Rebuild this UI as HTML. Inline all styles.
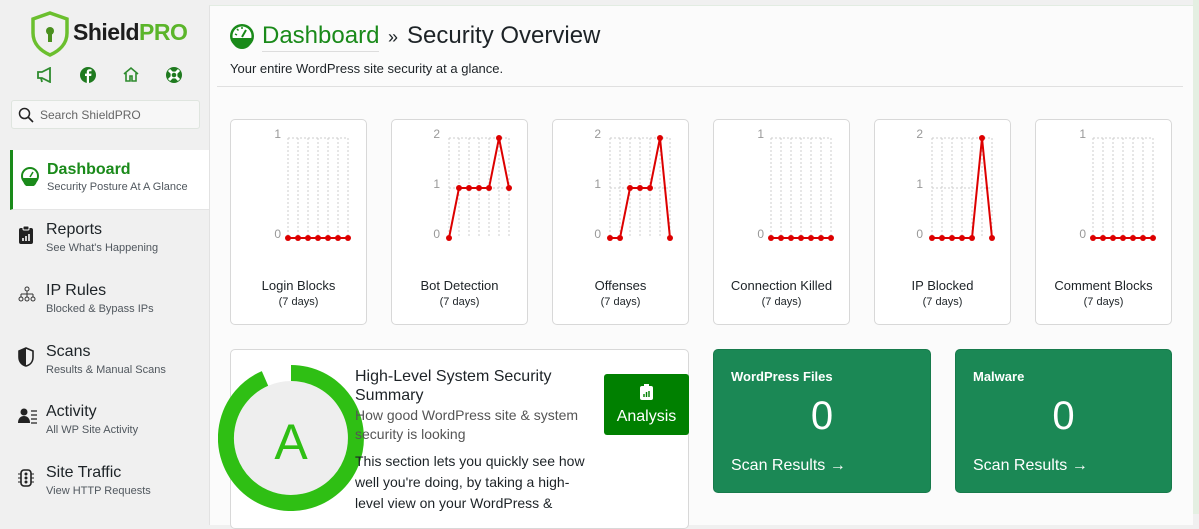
<!DOCTYPE html>
<html><head><meta charset="utf-8"><style>
*{box-sizing:border-box;margin:0;padding:0}
body{width:1199px;height:514px;overflow:hidden;background:#f0f0f0;font-family:"Liberation Sans",sans-serif;color:#1d2327;position:relative}
.side{position:absolute;left:0;top:0;width:209px;height:514px;background:#f0f0f0}
.main{position:absolute;left:209px;top:5px;width:984px;height:520px;background:#fbfbfb;border-left:1px solid #e2e2e2;border-top:1px solid #e2ece2}
.strip{position:absolute;left:1193px;top:0;width:6px;height:514px;background:#e4efe2}
.item{position:absolute;left:10px;width:199px;height:60px}
.item .t{position:absolute;left:36px;top:10px;font-size:16px;color:#1d2327}
.item .s{position:absolute;left:36px;top:31px;font-size:11px;color:#50575e}
.item svg{position:absolute;left:8px;top:14px}
.card{position:absolute;top:119px;width:137px;height:206px;background:#fff;border:1px solid #d8d8d8;border-radius:5px}
.card svg{position:absolute;left:0;top:0}
.card .n{position:absolute;top:158px;width:100%;text-align:center;font-size:13px}
.card .d{position:absolute;top:176px;width:100%;text-align:center;font-size:11px}
.g{position:absolute;top:349px;height:144px;background:#1b8855;border-radius:5px;color:#fff;border:1px solid #177a4b}
.g .h{position:absolute;left:17px;top:19px;font-size:13px;font-weight:bold}
.g .z{position:absolute;left:0;width:100%;text-align:center;top:44px;font-size:40px}
.g .l{position:absolute;left:17px;top:107px;font-size:16px}
</style></head><body>
<div class="side">
 <svg style="position:absolute;left:30px;top:11px" width="40" height="46" viewBox="0 0 40 46"><path d="M20 2 L37 8 V22 C37 33 29 40 20 44 C11 40 3 33 3 22 V8 Z" fill="none" stroke="#6bbf2e" stroke-width="3.5"/><circle cx="20" cy="20" r="4" fill="#4a8f1f"/><rect x="18" y="22" width="4" height="9" fill="#4a8f1f"/></svg>
 <div style="position:absolute;left:73px;top:19px;font-size:23px;font-weight:bold;letter-spacing:-0.5px"><span style="color:#1d1d1d">Shield</span><span style="color:#5bb52a">PRO</span></div>
 <svg style="position:absolute;left:36px;top:67px" width="18" height="16" viewBox="0 0 18 16"><path d="M2 5h4l8-4v14l-8-4H2z M5 11l1 4" fill="none" stroke="#2e8b2e" stroke-width="1.8"/></svg>
 <svg style="position:absolute;left:79px;top:66px" width="18" height="18"><circle cx="9" cy="9" r="8" fill="#1f7a1f"/><path d="M10 17V10h2.2l.3-2.4H10V6.3c0-.7.3-1 1-1h1.5V3.2H10.6C8.6 3.2 7.8 4.4 7.8 6v1.6H6V10h1.8v7z" fill="#fff"/></svg>
 <svg style="position:absolute;left:122px;top:66px" width="18" height="17" viewBox="0 0 18 17"><path d="M2 8L9 2l7 6 M4 7v8h4v-5h2v5h4V7" fill="none" stroke="#2e8b2e" stroke-width="1.6"/></svg>
 <svg style="position:absolute;left:165px;top:66px" width="18" height="18"><circle cx="9" cy="9" r="8" fill="#1f7a1f"/><circle cx="9" cy="9" r="3.5" fill="#fff"/><circle cx="9" cy="9" r="2.3" fill="#1f7a1f"/><path d="M4 4l3 3M14 4l-3 3M4 14l3-3M14 14l-3-3" stroke="#fff" stroke-width="3"/></svg>
 <div style="position:absolute;left:11px;top:100px;width:189px;height:29px;border:1px solid #dfe5df;background:#f7f7f7;border-radius:3px">
  <svg style="position:absolute;left:6px;top:6px" width="16" height="16"><circle cx="6.5" cy="6.5" r="5" fill="none" stroke="#222" stroke-width="1.5"/><path d="M10 10l5 5" stroke="#222" stroke-width="1.6"/></svg>
  <span style="position:absolute;left:28px;top:7px;font-size:12px;color:#666">Search ShieldPRO</span></div>
 <div class="item" style="top:150px;height:60px;background:#fff;border-left:3px solid #1a8a1a;border-bottom:1px solid #e5e5e5">
  <svg width="20" height="20" style="left:7px;top:16px"><circle cx="10" cy="10" r="9" fill="#1a8a1a"/><circle cx="10" cy="10" r="7" fill="#fff"/><path d="M3 12h14v2a7 7 0 0 1-14 0z" fill="#1a8a1a"/><path d="M10 11l3-5" stroke="#1a8a1a" stroke-width="1.5"/></svg>
  <div class="t" style="left:34px;top:11px;font-weight:bold;color:#1a8a1a">Dashboard</div><div class="s" style="left:34px;top:31px">Security Posture At A Glance</div></div>
 <div class="item" style="top:211px"><svg width="16" height="20"><rect x="1" y="3" width="14" height="16" rx="2" fill="#222"/><rect x="5" y="1" width="6" height="4" rx="1" fill="#222" stroke="#fff"/><path d="M5 16v-3M8 16v-5M11 16v-7" stroke="#fff" stroke-width="1.6"/></svg><div class="t">Reports</div><div class="s">See What's Happening</div></div>
 <div class="item" style="top:272px"><svg width="18" height="16"><circle cx="9" cy="3" r="2" fill="none" stroke="#333"/><path d="M9 5v3M3 8h12M3 8v3M9 8v3M15 8v3" stroke="#333"/><circle cx="3" cy="13" r="2" fill="none" stroke="#333"/><circle cx="9" cy="13" r="2" fill="none" stroke="#333"/><circle cx="15" cy="13" r="2" fill="none" stroke="#333"/></svg><div class="t">IP Rules</div><div class="s">Blocked &amp; Bypass IPs</div></div>
 <div class="item" style="top:333px"><svg width="16" height="20"><path d="M8 1l7 3v6c0 5-3 8-7 9-4-1-7-4-7-9V4z" fill="none" stroke="#222" stroke-width="1.6"/><path d="M8 1l-7 3v6c0 5 3 8 7 9z" fill="#222"/></svg><div class="t">Scans</div><div class="s">Results &amp; Manual Scans</div></div>
 <div class="item" style="top:393px"><svg width="20" height="18"><circle cx="6" cy="5" r="3.5" fill="#222"/><path d="M0 16c0-5 3-7 6-7s6 2 6 7z" fill="#222"/><path d="M13 4h6M13 8h6M13 12h6M13 16h6" stroke="#222" stroke-width="1.3"/></svg><div class="t">Activity</div><div class="s">All WP Site Activity</div></div>
 <div class="item" style="top:454px"><svg width="16" height="20"><rect x="3" y="2" width="10" height="16" rx="3" fill="none" stroke="#222" stroke-width="1.6"/><circle cx="8" cy="6" r="1.5" fill="#222"/><circle cx="8" cy="10" r="1.5" fill="#222"/><circle cx="8" cy="14" r="1.5" fill="#222"/><path d="M0 6h3M0 10h3M0 14h3M13 6h3M13 10h3M13 14h3" stroke="#222"/></svg><div class="t">Site Traffic</div><div class="s">View HTTP Requests</div></div>
</div>
<div class="main"></div>
<div class="strip"></div>
<svg style="position:absolute;left:229px;top:23px" width="26" height="26"><circle cx="13" cy="13" r="12" fill="#1a8a1a"/><circle cx="13" cy="13" r="9.5" fill="#fff"/><path d="M3 15h20v1a10 10 0 0 1-20 0z" fill="#1a8a1a"/><path d="M13 14l4-7" stroke="#1a8a1a" stroke-width="2"/><path d="M6 11l2 1M8 6l1.5 1.5M13 4v2" stroke="#1a8a1a" stroke-width="1.5"/></svg>
<div style="position:absolute;left:262px;top:22px;font-size:24px;color:#1a8a1a;border-bottom:1px solid #ddd;padding-bottom:1px">Dashboard</div>
<div style="position:absolute;left:388px;top:27px;font-size:18px">»</div>
<div style="position:absolute;left:407px;top:22px;font-size:24px;color:#1d2327">Security Overview</div>
<div style="position:absolute;left:230px;top:61px;font-size:13px">Your entire WordPress site security at a glance.</div>
<div style="position:absolute;left:217px;top:86px;width:966px;height:1px;background:#e0e0e0"></div>

<div class="card" style="left:230px"><svg width="137" height="150"><g stroke="#ccc" stroke-dasharray="2,2"><path d="M57 18V118M67 18V118M77 18V118M87 18V118M97 18V118M107 18V118M117 18V118M57 18H117"/></g><g fill="#999" font-size="12" text-anchor="end"><text x="50" y="18">1</text><text x="50" y="118">0</text></g><polyline points="57,118 67,118 77,118 87,118 97,118 107,118 117,118" fill="none" stroke="#d00" stroke-width="2"/><g fill="#d00"><circle cx="57" cy="118" r="3"/><circle cx="67" cy="118" r="3"/><circle cx="77" cy="118" r="3"/><circle cx="87" cy="118" r="3"/><circle cx="97" cy="118" r="3"/><circle cx="107" cy="118" r="3"/><circle cx="117" cy="118" r="3"/></g></svg><div class="n">Login Blocks</div><div class="d">(7 days)</div></div>

<div class="card" style="left:391px"><svg width="137" height="150"><g stroke="#ccc" stroke-dasharray="2,2"><path d="M57 18V118M67 18V118M77 18V118M87 18V118M97 18V118M107 18V118M117 18V118M57 18H117M57 68H117"/></g><g fill="#999" font-size="12" text-anchor="end"><text x="48" y="18">2</text><text x="48" y="68">1</text><text x="48" y="118">0</text></g><polyline points="57,118 67,68 77,68 87,68 97,68 107,18 117,68" fill="none" stroke="#d00" stroke-width="2"/><g fill="#d00"><circle cx="57" cy="118" r="3"/><circle cx="67" cy="68" r="3"/><circle cx="77" cy="68" r="3"/><circle cx="87" cy="68" r="3"/><circle cx="97" cy="68" r="3"/><circle cx="107" cy="18" r="3"/><circle cx="117" cy="68" r="3"/></g></svg><div class="n">Bot Detection</div><div class="d">(7 days)</div></div>

<div class="card" style="left:552px"><svg width="137" height="150"><g stroke="#ccc" stroke-dasharray="2,2"><path d="M57 18V118M67 18V118M77 18V118M87 18V118M97 18V118M107 18V118M117 18V118M57 18H117M57 68H117"/></g><g fill="#999" font-size="12" text-anchor="end"><text x="48" y="18">2</text><text x="48" y="68">1</text><text x="48" y="118">0</text></g><polyline points="57,118 67,118 77,68 87,68 97,68 107,18 117,118" fill="none" stroke="#d00" stroke-width="2"/><g fill="#d00"><circle cx="57" cy="118" r="3"/><circle cx="67" cy="118" r="3"/><circle cx="77" cy="68" r="3"/><circle cx="87" cy="68" r="3"/><circle cx="97" cy="68" r="3"/><circle cx="107" cy="18" r="3"/><circle cx="117" cy="118" r="3"/></g></svg><div class="n">Offenses</div><div class="d">(7 days)</div></div>

<div class="card" style="left:713px"><svg width="137" height="150"><g stroke="#ccc" stroke-dasharray="2,2"><path d="M57 18V118M67 18V118M77 18V118M87 18V118M97 18V118M107 18V118M117 18V118M57 18H117"/></g><g fill="#999" font-size="12" text-anchor="end"><text x="50" y="18">1</text><text x="50" y="118">0</text></g><polyline points="57,118 117,118" fill="none" stroke="#d00" stroke-width="2"/><g fill="#d00"><circle cx="57" cy="118" r="3"/><circle cx="67" cy="118" r="3"/><circle cx="77" cy="118" r="3"/><circle cx="87" cy="118" r="3"/><circle cx="97" cy="118" r="3"/><circle cx="107" cy="118" r="3"/><circle cx="117" cy="118" r="3"/></g></svg><div class="n">Connection Killed</div><div class="d">(7 days)</div></div>

<div class="card" style="left:874px"><svg width="137" height="150"><g stroke="#ccc" stroke-dasharray="2,2"><path d="M57 18V118M67 18V118M77 18V118M87 18V118M97 18V118M107 18V118M117 18V118M57 18H117M57 68H117"/></g><g fill="#999" font-size="12" text-anchor="end"><text x="48" y="18">2</text><text x="48" y="68">1</text><text x="48" y="118">0</text></g><polyline points="57,118 67,118 77,118 87,118 97,118 107,18 117,118" fill="none" stroke="#d00" stroke-width="2"/><g fill="#d00"><circle cx="57" cy="118" r="3"/><circle cx="67" cy="118" r="3"/><circle cx="77" cy="118" r="3"/><circle cx="87" cy="118" r="3"/><circle cx="97" cy="118" r="3"/><circle cx="107" cy="18" r="3"/><circle cx="117" cy="118" r="3"/></g></svg><div class="n">IP Blocked</div><div class="d">(7 days)</div></div>

<div class="card" style="left:1035px"><svg width="137" height="150"><g stroke="#ccc" stroke-dasharray="2,2"><path d="M57 18V118M67 18V118M77 18V118M87 18V118M97 18V118M107 18V118M117 18V118M57 18H117"/></g><g fill="#999" font-size="12" text-anchor="end"><text x="50" y="18">1</text><text x="50" y="118">0</text></g><polyline points="57,118 117,118" fill="none" stroke="#d00" stroke-width="2"/><g fill="#d00"><circle cx="57" cy="118" r="3"/><circle cx="67" cy="118" r="3"/><circle cx="77" cy="118" r="3"/><circle cx="87" cy="118" r="3"/><circle cx="97" cy="118" r="3"/><circle cx="107" cy="118" r="3"/><circle cx="117" cy="118" r="3"/></g></svg><div class="n">Comment Blocks</div><div class="d">(7 days)</div></div>

<div style="position:absolute;left:230px;top:349px;width:459px;height:180px;background:#fff;border:1px solid #d8d8d8;border-radius:5px"></div>
<svg style="position:absolute;left:218px;top:365px" width="146" height="146" viewBox="0 0 146 146"><circle cx="73" cy="73" r="57" fill="#eee"/><path d="M73 8 A65 65 0 1 1 47 13.4" fill="none" stroke="#2fbf14" stroke-width="16"/><text x="73" y="94" text-anchor="middle" font-size="50" fill="#2fbf14" font-family="Liberation Sans">A</text></svg>
<div style="position:absolute;left:355px;top:367px;width:245px;font-size:16px;line-height:19px">High-Level System Security Summary</div>
<div style="position:absolute;left:355px;top:406px;width:245px;font-size:14px;line-height:19px;color:#555">How good WordPress site &amp; system security is looking</div>
<div style="position:absolute;left:355px;top:451px;width:238px;font-size:14px;line-height:21px">This section lets you quickly see how well you're doing, by taking a high-level view on your WordPress &amp;</div>
<div style="position:absolute;left:604px;top:374px;width:85px;height:61px;background:#008000;border-radius:3px;color:#fff;text-align:center">
 <svg style="position:absolute;left:36px;top:10px" width="13" height="16"><rect x="0" y="2" width="13" height="14" rx="2" fill="#fff"/><rect x="4" y="0" width="5" height="3" fill="#fff"/><path d="M4 13v-3M6.5 13v-5M9 13v-6" stroke="#008000" stroke-width="1.4"/></svg>
 <div style="position:absolute;top:34px;width:100%;font-size:16px">Analysis</div></div>
<div class="g" style="left:713px;width:218px"><div class="h">WordPress Files</div><div class="z">0</div><div class="l">Scan Results →</div></div>
<div class="g" style="left:955px;width:217px"><div class="h">Malware</div><div class="z">0</div><div class="l">Scan Results →</div></div>
</body></html>
